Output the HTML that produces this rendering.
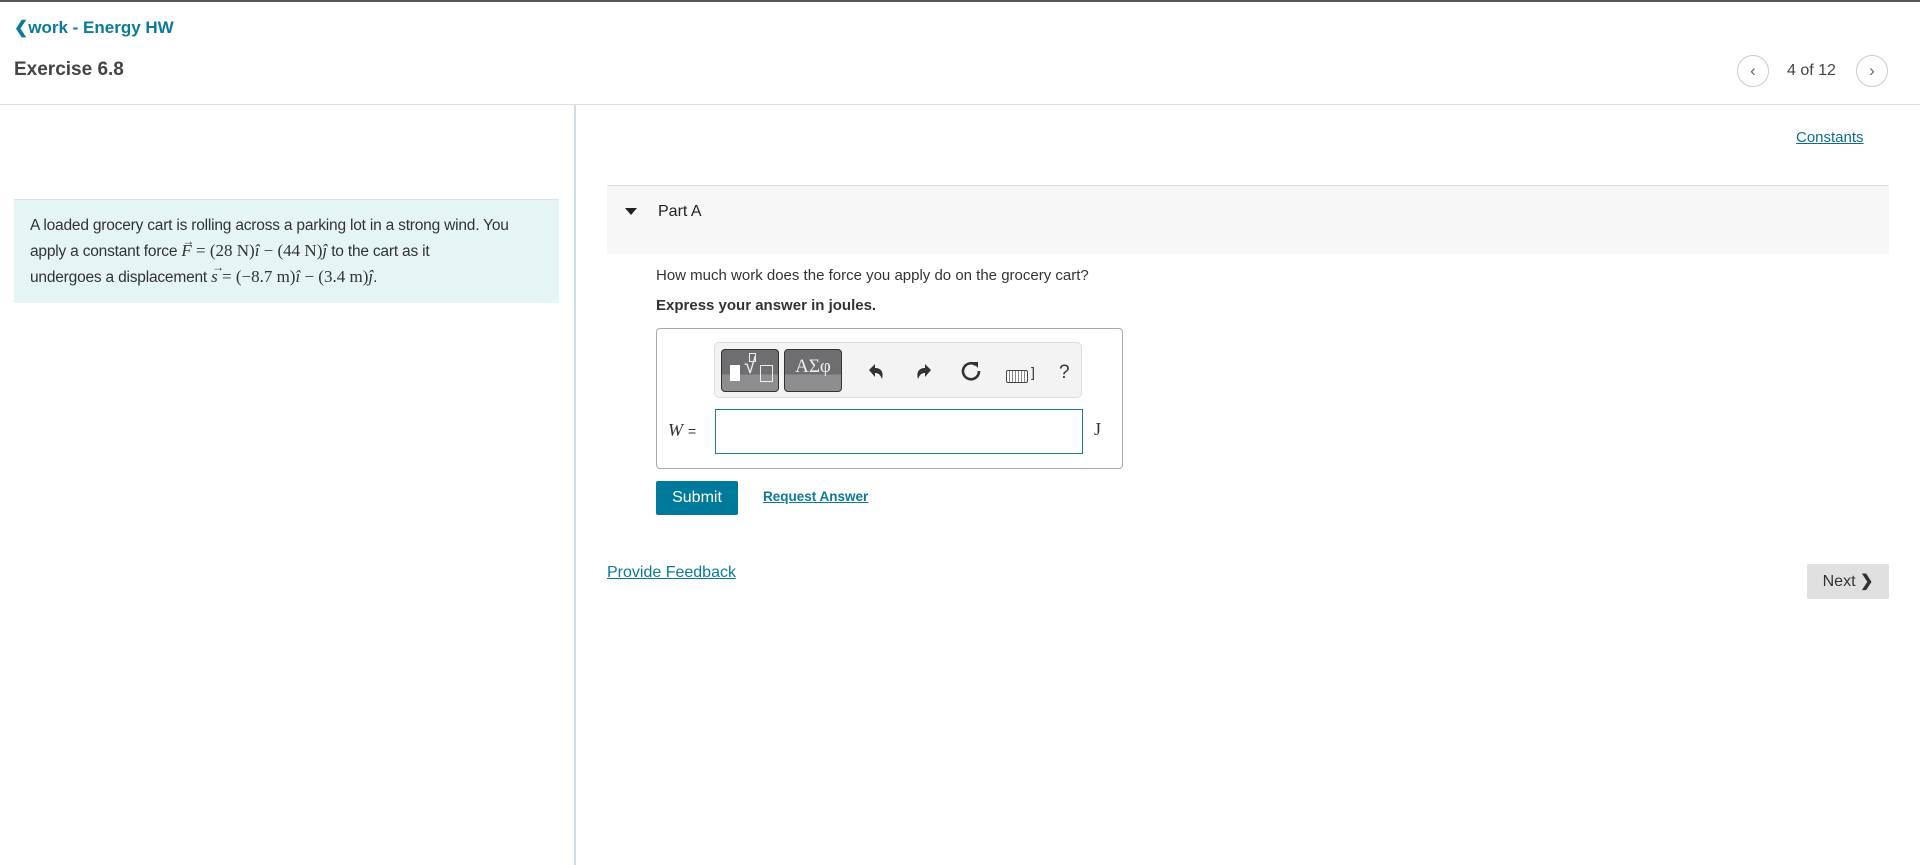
<!DOCTYPE html>
<html><head><style>
body{margin:0;width:1920px;height:865px;position:relative;font-family:"Liberation Sans",sans-serif;background:#fff;overflow:hidden;color:#333}
.a{position:absolute}
.m{font-family:"Liberation Serif",serif;letter-spacing:0}
.v{position:relative;display:inline-block}
.v b{position:absolute;left:1px;top:-9px;font-weight:normal;font-size:12px}
</style></head><body>
<div class="a" style="left:0;top:0;width:1920px;height:2px;background:#555"></div>
<div class="a" style="left:14px;top:18px;font-size:17px;font-weight:bold;color:#0a7a9a">&#10094;work - Energy HW</div>
<div class="a" style="left:14px;top:59px;font-size:19px;font-weight:bold;color:#444">Exercise 6.8</div>
<div class="a" style="left:1737px;top:55px;width:30px;height:30px;border:1px solid #ccc;border-radius:50%;text-align:center;line-height:29px;color:#666;font-size:17px">&lsaquo;</div>
<div class="a" style="left:1787px;top:62px;font-size:16px;color:#444">4 of 12</div>
<div class="a" style="left:1856px;top:55px;width:30px;height:30px;border:1px solid #ccc;border-radius:50%;text-align:center;line-height:29px;color:#666;font-size:17px">&rsaquo;</div>
<div class="a" style="left:0;top:104px;width:1920px;height:1px;background:#ddd"></div>
<div class="a" style="left:574px;top:105px;width:2px;height:760px;background:#d0dbe6"></div>
<div class="a" style="left:14px;top:199px;width:545px;height:103px;background:#e5f4f5;border-top:1px solid #d6e6e8"></div>
<div class="a" style="left:30px;top:213px;white-space:nowrap;font-size:15.5px;letter-spacing:-0.2px;line-height:25px;color:#333">A loaded grocery cart is rolling across a parking lot in a strong wind. You<br>apply a constant force <span class="m" style="font-size:17px"><span class="v"><i>F</i><b>&rarr;</b></span> = (28 N)<i>î</i> &minus; (44 N)<i>ĵ</i></span> to the cart as it<br>undergoes a displacement <span class="m" style="font-size:17px"><span class="v"><i>s</i><b>&rarr;</b></span> = (&minus;8.7 m)<i>î</i> &minus; (3.4 m)<i>ĵ</i></span>.</div>
<div class="a" style="left:1796px;top:129px;font-size:15px;color:#0a6e8a;text-decoration:underline">Constants</div>
<div class="a" style="left:607px;top:185px;width:1282px;height:68px;background:#f7f7f7;border-top:1px solid #ddd"></div>
<div class="a" style="left:625px;top:208px;width:0;height:0;border-left:6px solid transparent;border-right:6px solid transparent;border-top:7px solid #222"></div>
<div class="a" style="left:658px;top:203px;font-size:16px;color:#222">Part A</div>
<div class="a" style="left:656px;top:267px;font-size:15px;color:#333">How much work does the force you apply do on the grocery cart?</div>
<div class="a" style="left:656px;top:297px;font-size:15px;font-weight:bold;color:#333">Express your answer in joules.</div>
<div class="a" style="left:656px;top:328px;width:465px;height:139px;border:1px solid #aaa;border-radius:4px"></div>
<div class="a" style="left:714px;top:342px;width:366px;height:54px;background:#f3f3f3;border:1px solid #ddd;border-radius:5px"></div>
<div class="a" style="left:721px;top:349px;width:56px;height:41px;border:1px solid #333;border-radius:4px;background:linear-gradient(#6e6e70 0 60%,#8e8e90 60%)"><div class="a" style="left:8px;top:15px;width:10px;height:16px;background:#fff"></div><div class="a" style="left:22px;top:3px;color:#eee;font-size:22px">&radic;</div><div class="a" style="left:38px;top:15px;width:11px;height:15px;border:1px solid #eee"></div><div class="a" style="left:27px;top:3px;width:5px;height:7px;border:1px solid #eee"></div></div>
<div class="a" style="left:784px;top:349px;width:56px;height:41px;border:1px solid #333;border-radius:4px;background:linear-gradient(#6e6e70 0 60%,#8e8e90 60%);color:#eee;font-family:'Liberation Serif',serif;font-size:19px;text-align:center;line-height:34px">ΑΣφ</div>
<svg class="a" style="left:866px;top:362px" width="20" height="20" viewBox="0 0 20 20"><path d="M3 8 L9 2 V6 C15 6 18 10 16 17 C14 12 12 11 9 11 V15 Z" fill="#333"/></svg>
<svg class="a" style="left:914px;top:362px" width="20" height="20" viewBox="0 0 20 20"><path d="M17 8 L11 2 V6 C5 6 2 10 4 17 C6 12 8 11 11 11 V15 Z" fill="#333"/></svg>
<svg class="a" style="left:960px;top:360px" width="22" height="22" viewBox="0 0 22 22"><path d="M16 5 A8 8 0 1 0 19 11" fill="none" stroke="#333" stroke-width="2.6"/><path d="M12 2 L18 2 L18 8 Z" fill="#333"/></svg>
<div class="a" style="left:1006px;top:370px;width:20px;height:11px;border:1.5px solid #444;border-radius:2px;background:repeating-linear-gradient(90deg,#fff 0 2px,#888 2px 3px)"></div>
<div class="a" style="left:1031px;top:364px;font-size:14px;color:#333">]</div>
<div class="a" style="left:1059px;top:362px;font-size:19px;color:#333">?</div>
<div class="a" style="left:668px;top:420px;font-size:18px" ><span class="m"><i>W</i></span> <span style="font-size:14px">=</span></div>
<div class="a" style="left:715px;top:409px;width:366px;height:43px;border:1px solid #1b7a94"></div>
<div class="a m" style="left:1094px;top:419px;font-size:18px">J</div>
<div class="a" style="left:656px;top:481px;width:82px;height:34px;background:#007a9b;border-radius:2px;color:#fff;font-size:16px;text-align:center;line-height:34px">Submit</div>
<div class="a" style="left:763px;top:489px;font-size:13.5px;font-weight:bold;color:#0a7a9a;text-decoration:underline">Request Answer</div>
<div class="a" style="left:607px;top:564px;font-size:16px;color:#0a7a9a;text-decoration:underline">Provide Feedback</div>
<div class="a" style="left:1807px;top:564px;width:82px;height:35px;background:#e0e0e0;border-radius:2px;color:#333;font-size:16px;text-align:center;line-height:35px">Next <b>&#10095;</b></div>
</body></html>
